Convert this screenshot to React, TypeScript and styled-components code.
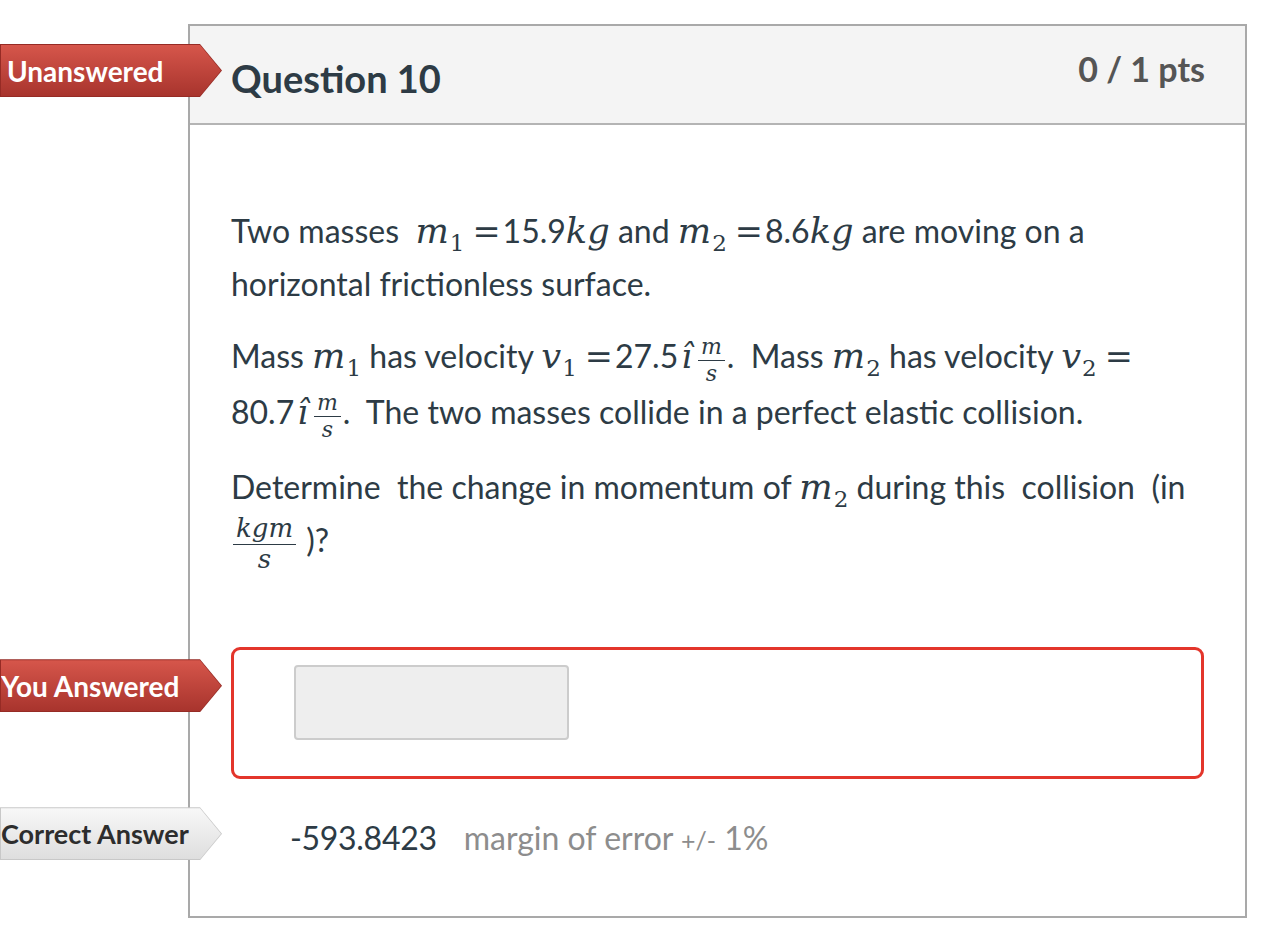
import React from 'react';
import styled, { createGlobalStyle } from 'styled-components';

const GlobalStyle = createGlobalStyle`
  body {
    margin: 0;
    background: #ffffff;
    font-family: Lato, "Open Sans", sans-serif;
    color: #2d3b45;
  }
`;

const Page = styled.div`
  padding: 24px 29px 20px 188px;
`;

const Card = styled.div`
  border: 2px solid #a9a9a9;
  height: 890px;
  display: flex;
  flex-direction: column;
`;

const Header = styled.div`
  position: relative;
  height: 97px;
  background: #f4f4f4;
  border-bottom: 2px solid #b4b4b4;
  display: flex;
  justify-content: space-between;
  align-items: flex-start;
  padding: 0 40px 0 41px;
`;

const Title = styled.h2`
  margin: 33px 0 0;
  font-size: 38px;
  font-weight: 700;
  line-height: 1;
  color: #2d3b45;
`;

const Points = styled.div`
  margin-top: 26px;
  font-size: 34px;
  font-weight: 700;
  line-height: 1;
  color: #555555;
`;

const Banner = styled.div<{ $top: number; $tone: 'red' | 'gray' }>`
  position: absolute;
  left: -190px;
  top: ${(p) => p.$top}px;
  width: 222px;
  height: 53px;
  padding: 1px;
  box-sizing: border-box;
  background: ${(p) => (p.$tone === 'red' ? '#962b25' : '#c8c8c8')};
  clip-path: polygon(0 0, 200px 0, 100% 50%, 200px 100%, 0 100%);
`;

const BannerFace = styled.div<{ $tone: 'red' | 'gray'; $indent: number }>`
  height: 100%;
  display: flex;
  align-items: center;
  padding-left: ${(p) => p.$indent}px;
  white-space: nowrap;
  font-size: ${(p) => (p.$tone === 'red' ? 28 : 27)}px;
  font-weight: 700;
  color: ${(p) => (p.$tone === 'red' ? '#ffffff' : '#2d2d2d')};
  background: ${(p) =>
    p.$tone === 'red'
      ? 'linear-gradient(to bottom, #d6564b, #a8342d)'
      : 'linear-gradient(to bottom, #f8f8f8, #dedede)'};
  clip-path: polygon(0 0, 199px 0, 100% 50%, 199px 100%, 0 100%);
`;

const QuestionText = styled.div`
  padding: 79px 41px 0;
  font-size: 32px;
  line-height: 53px;
`;

const Para = styled.p`
  margin: 0 0 19px;
`;

const Mi = styled.span`
  font-family: "DejaVu Serif", "Liberation Serif", serif;
  font-style: italic;
  font-size: 1.1em;
  line-height: 1;
`;

const Sub = styled.sub`
  font-family: "DejaVu Serif", "Liberation Serif", serif;
  font-style: normal;
  font-size: 0.72em;
  line-height: 0;
  vertical-align: -0.36em;
  margin-left: 1px;
`;

const Eq = styled.span<{ $after?: number }>`
  font-family: "DejaVu Serif", "Liberation Serif", serif;
  font-size: 1.05em;
  line-height: 1;
  margin-left: 8px;
  margin-right: ${(p) => p.$after ?? 2}px;
`;

const HatI = styled.span`
  font-family: "DejaVu Serif", "Liberation Serif", serif;
  font-style: italic;
  font-size: 1.05em;
  line-height: 1;
  margin: 0 4px 0 3px;
`;

const Frac = styled.span<{ $size: number }>`
  display: inline-flex;
  flex-direction: column;
  align-items: center;
  vertical-align: middle;
  margin: 0 2px;
  font-family: "DejaVu Serif", "Liberation Serif", serif;
  font-style: italic;
  font-size: ${(p) => p.$size}px;
  line-height: 1.05;
`;

const FracTop = styled.span`
  padding: 0 3px 2px;
  border-bottom: 1.5px solid #2d3b45;
`;

const FracBottom = styled.span`
  padding-top: 1px;
`;

const AnswerRow = styled.div`
  position: relative;
  margin-top: 55px;
  padding: 0 41px;
`;

const AnswerBox = styled.div`
  height: 132px;
  box-sizing: border-box;
  border: 3px solid #e3352b;
  border-radius: 9px;
  padding: 15px 60px;
`;

const AnswerInput = styled.div`
  width: 275px;
  height: 75px;
  box-sizing: border-box;
  background: #eeeeee;
  border: 2px solid #cccccc;
  border-radius: 4px;
`;

const CorrectRow = styled.div`
  position: relative;
  margin-top: 28px;
  height: 53px;
  box-sizing: border-box;
  display: flex;
  align-items: center;
  padding: 7px 0 0 100px;
  font-size: 32px;
`;

const CorrectValue = styled.span`
  color: #2d3b45;
  letter-spacing: -0.3px;
`;

const Margin = styled.span`
  margin-left: 27px;
  color: #8d8d8d;
`;

const MarginSmall = styled.span`
  font-size: 25px;
`;

const Hat = () => <HatI>ı̂</HatI>;

const MS = () => (
  <Frac $size={22}>
    <FracTop>m</FracTop>
    <FracBottom>s</FracBottom>
  </Frac>
);

export default function App() {
  return (
    <>
      <GlobalStyle />
      <Page>
        <Card>
          <Header>
            <Banner $top={18} $tone="red">
              <BannerFace $tone="red" $indent={6}>Unanswered</BannerFace>
            </Banner>
            <Title>Question 10</Title>
            <Points>0 / 1 pts</Points>
          </Header>

          <QuestionText>
            <Para>
              Two masses{'\u00a0 '}
              <Mi>m</Mi><Sub>1</Sub>
              <Eq>=</Eq>15.9<Mi>kg</Mi> and <Mi>m</Mi><Sub>2</Sub>
              <Eq>=</Eq>8.6<Mi>kg</Mi> are moving on a horizontal frictionless surface.
            </Para>
            <Para>
              Mass <Mi>m</Mi><Sub>1</Sub> has velocity <Mi>v</Mi><Sub>1</Sub>
              <Eq>=</Eq>27.5<Hat /><MS />.{'\u00a0 '}Mass <Mi>m</Mi><Sub>2</Sub> has velocity{' '}
              <Mi>v</Mi><Sub>2</Sub>
              <Eq $after={8}>=</Eq> 80.7<Hat /><MS />.{'\u00a0 '}The two masses collide in a perfect elastic collision.
            </Para>
            <Para>
              Determine{'\u00a0 '}the change in momentum of <Mi>m</Mi><Sub>2</Sub> during this{'\u00a0 '}collision{'\u00a0 '}(in{' '}
              <Frac $size={26}>
                <FracTop>kgm</FracTop>
                <FracBottom>s</FracBottom>
              </Frac>{' '}
              )?
            </Para>
          </QuestionText>

          <AnswerRow>
            <Banner $top={12} $tone="red">
              <BannerFace $tone="red" $indent={0}>You Answered</BannerFace>
            </Banner>
            <AnswerBox>
              <AnswerInput />
            </AnswerBox>
          </AnswerRow>

          <CorrectRow>
            <Banner $top={0} $tone="gray">
              <BannerFace $tone="gray" $indent={-6}>Correct Answer</BannerFace>
            </Banner>
            <CorrectValue>-593.8423</CorrectValue>
            <Margin>
              margin of error <MarginSmall>+/-</MarginSmall> 1%
            </Margin>
          </CorrectRow>
        </Card>
      </Page>
    </>
  );
}
